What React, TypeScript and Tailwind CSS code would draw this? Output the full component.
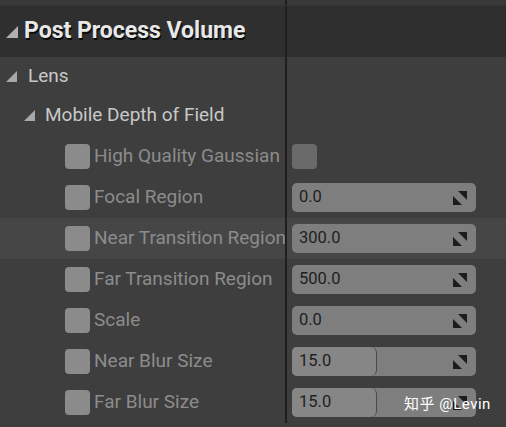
import React from 'react';

const Arrow = ({ size = 11, color = '#a8a8a8' }: { size?: number; color?: string }) => (
  <svg width={size} height={size} viewBox="0 0 10 10">
    <polygon points="10,0 10,10 0,10" fill={color} />
  </svg>
);

const ResetIcon = () => (
  <svg width="16" height="16" viewBox="0 0 16 16">
    <polygon points="6,1 15,1 15,10" fill="#1c1c1c" />
    <polygon points="1,6 1,15 10,15" fill="#1c1c1c" />
  </svg>
);

const Checkbox = ({ dark }: { dark?: boolean }) => (
  <div className={`shrink-0 w-[25px] h-[25px] rounded-[4px] ${dark ? 'bg-[#6a6a6a]' : 'bg-[#8b8b8b]'}`} />
);

type Prop = { label: string; value?: string; slider?: boolean; check?: boolean; hl?: boolean };

const props: Prop[] = [
  { label: 'High Quality Gaussian', check: true },
  { label: 'Focal Region', value: '0.0' },
  { label: 'Near Transition Region', value: '300.0', hl: true },
  { label: 'Far Transition Region', value: '500.0' },
  { label: 'Scale', value: '0.0' },
  { label: 'Near Blur Size', value: '15.0', slider: true },
  { label: 'Far Blur Size', value: '15.0', slider: true },
];

const Row = ({ left, right, className = '' }: { left: React.ReactNode; right?: React.ReactNode; className?: string }) => (
  <div className={`flex ${className}`}>
    <div className="w-[285px] flex items-center overflow-hidden whitespace-nowrap">{left}</div>
    <div className="w-[2px] bg-[#1f1f1f]" />
    <div className="flex-1 flex items-center pl-[5px]">{right}</div>
  </div>
);

const ValueBox = ({ value, slider }: { value: string; slider?: boolean }) => (
  <div className="relative w-[184px] h-[29px] rounded-[5px] bg-[#7e7e7e] flex items-center overflow-hidden">
    {slider && (
      <div className="absolute left-0 top-0 bottom-0 w-[85px] bg-[#868686] rounded-r-[6px] border-r border-[#4a4a4a]" />
    )}
    <span className="relative pl-[7px] text-[16.5px] text-[#1e1e1e]">{value}</span>
    <div className="relative ml-auto mr-[8px] flex items-center">
      <ResetIcon />
    </div>
  </div>
);

export default function App() {
  return (
    <div
      className="relative w-[506px] h-[427px] overflow-hidden bg-[#3e3e3e] text-[#8c8c8c]"
      style={{ fontFamily: 'Roboto, "Noto Sans CJK SC", sans-serif' }}
    >
      <Row className="h-[6px] bg-[#393939] border-b border-[#343434]" left={null} />
      <Row
        className="h-[51px] bg-[#2f2f2f]"
        left={
          <div className="flex items-center pl-[6px] gap-[6px]">
            <Arrow size={12} color="#b0b0b0" />
            <span className="text-[23px] font-bold text-[#e8e8e8] [text-shadow:1px_2px_0_#0a0a0a]">Post Process Volume</span>
          </div>
        }
      />
      <Row
        className="h-[38px]"
        left={
          <div className="flex items-center pl-[6px] gap-[11px]">
            <Arrow size={11} />
            <span className="text-[19px] text-[#c8c8c8]">Lens</span>
          </div>
        }
      />
      <Row
        className="h-[41px]"
        left={
          <div className="flex items-center pl-[24px] gap-[10px]">
            <Arrow size={11} />
            <span className="text-[19px] text-[#c8c8c8]">Mobile Depth of Field</span>
          </div>
        }
      />
      {props.map((p) => (
        <Row
          key={p.label}
          className={`h-[41px] ${p.hl ? 'bg-[#464646]' : ''}`}
          left={
            <div className="flex items-center pl-[65px] gap-[4px]">
              <Checkbox />
              <span className="text-[19px] text-[#8c8c8c]">{p.label}</span>
            </div>
          }
          right={p.check ? <Checkbox dark /> : <ValueBox value={p.value!} slider={p.slider} />}
        />
      ))}
      <div className="absolute left-[404px] top-[393px] text-[15px] text-white tracking-[0.5px]">知乎 @Levin</div>
    </div>
  );
}
